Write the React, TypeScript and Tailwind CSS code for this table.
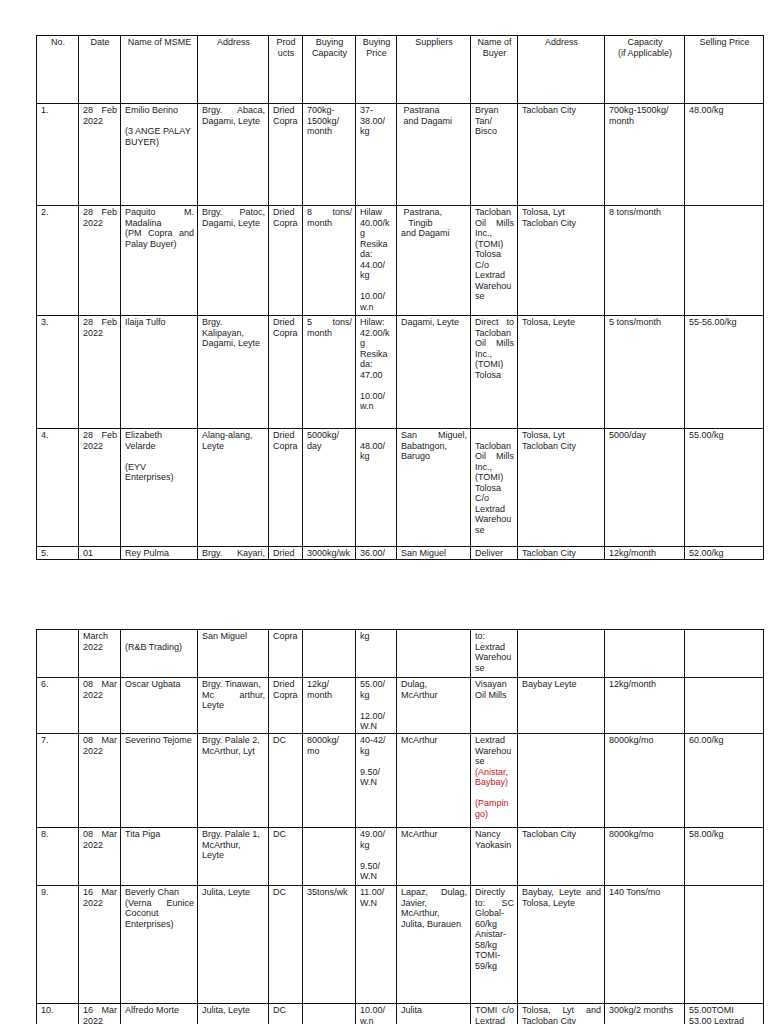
import React from "react";

const COLS =
  "grid grid-cols-[42px_42px_77px_71px_34px_53px_41px_74px_47px_87px_80px_79px]";

type RowData = { h: string; cells: string[][]; header?: boolean };

function Line({ text, center }: { text: string; center?: boolean }) {
  let t = text;
  let justify = false;
  let red = false;
  if (t.startsWith("!")) {
    red = true;
    t = t.slice(1);
  }
  if (t.startsWith("|")) {
    justify = true;
    t = t.slice(1);
  }
  if (t === "") return <div className="h-[10.5px]">{"\u00a0"}</div>;
  return (
    <div
      className={[
        "whitespace-pre",
        justify ? "text-justify [text-align-last:justify] whitespace-normal" : "",
        center ? "text-center" : "",
        red ? "text-[#c81414]" : "",
      ].join(" ")}
    >
      {t}
    </div>
  );
}

function Row({ h, cells, header }: RowData) {
  return (
    <div className={`${COLS} ${h}`}>
      {cells.map((lines, i) => (
        <div
          key={i}
          className="border-r border-b border-[#111] pl-[4px] pr-[3px] pt-[1px] overflow-hidden"
        >
          {lines.map((l, j) => (
            <Line key={j} text={l} center={header} />
          ))}
        </div>
      ))}
    </div>
  );
}

const table1: RowData[] = [
  {
    h: "h-[68px]",
    header: true,
    cells: [
      ["No."],
      ["Date"],
      ["Name of MSME"],
      ["Address"],
      ["Prod", "ucts"],
      ["Buying", "Capacity"],
      ["Buying", "Price"],
      ["Suppliers"],
      ["Name of", "Buyer"],
      ["Address"],
      ["Capacity", "(if Applicable)"],
      ["Selling Price"],
    ],
  },
  {
    h: "h-[102px]",
    cells: [
      ["1."],
      ["|28 Feb", "2022"],
      ["Emilio Berino", "", "(3 ANGE PALAY", "BUYER)"],
      ["|Brgy. Abaca,", "Dagami, Leyte"],
      ["Dried", "Copra"],
      ["700kg-", "1500kg/", "month"],
      ["37-", "38.00/", "kg"],
      [" Pastrana", " and Dagami"],
      ["Bryan", "Tan/", "Bisco"],
      ["Tacloban City"],
      ["700kg-1500kg/", "month"],
      ["48.00/kg"],
    ],
  },
  {
    h: "h-[110px]",
    cells: [
      ["2."],
      ["|28 Feb", "2022"],
      ["|Paquito M.", "Madalina", "|(PM Copra and", "Palay Buyer)"],
      ["|Brgy. Patoc,", "Dagami, Leyte"],
      ["Dried", "Copra"],
      ["|8 tons/", "month"],
      ["Hilaw", "40.00/k", "g", "Resika", "da:", "44.00/", "kg", "", "10.00/", "w.n"],
      [" Pastrana,", "   Tingib", "and Dagami"],
      ["Tacloban", "|Oil Mills", "Inc.,", "(TOMI)", "Tolosa", "C/o", "Lextrad", "Warehou", "se"],
      ["Tolosa, Lyt", "Tacloban City"],
      ["8 tons/month"],
      [],
    ],
  },
  {
    h: "h-[113px]",
    cells: [
      ["3."],
      ["|28 Feb", "2022"],
      ["Ilaija Tulfo"],
      ["Brgy.", "Kalipayan,", "Dagami, Leyte"],
      ["Dried", "Copra"],
      ["|5 tons/", "month"],
      ["Hilaw:", "42.00/k", "g", "Resika", "da:", "47.00", "", "10.00/", "w.n"],
      ["Dagami, Leyte"],
      ["|Direct to", "Tacloban", "|Oil Mills", "Inc.,", "(TOMI)", "Tolosa"],
      ["Tolosa, Leyte"],
      ["5 tons/month"],
      ["55-56.00/kg"],
    ],
  },
  {
    h: "h-[118px]",
    cells: [
      ["4."],
      ["|28 Feb", "2022"],
      ["Elizabeth", "Velarde", "", "(EYV", "Enterprises)"],
      ["Alang-alang,", "Leyte"],
      ["Dried", "Copra"],
      ["5000kg/", "day"],
      ["", "48.00/", "kg"],
      ["|San Miguel,", "Babatngon,", "Barugo"],
      ["", "Tacloban", "|Oil Mills", "Inc.,", "(TOMI)", "Tolosa", "C/o", "Lextrad", "Warehou", "se"],
      ["Tolosa, Lyt", "Tacloban City"],
      ["5000/day"],
      ["55.00/kg"],
    ],
  },
  {
    h: "h-[13px]",
    cells: [
      ["5."],
      ["01"],
      ["Rey Pulma"],
      ["|Brgy. Kayari,"],
      ["Dried"],
      ["3000kg/wk"],
      ["36.00/"],
      ["San Miguel"],
      ["Deliver"],
      ["Tacloban City"],
      ["12kg/month"],
      ["52.00/kg"],
    ],
  },
];

const table2: RowData[] = [
  {
    h: "h-[48px]",
    cells: [
      [],
      ["March", "2022"],
      ["", "(R&B Trading)"],
      ["San Miguel"],
      ["Copra"],
      [],
      ["kg"],
      [],
      ["to:", "Lextrad", "Warehou", "se"],
      [],
      [],
      [],
    ],
  },
  {
    h: "h-[56px]",
    cells: [
      ["6."],
      ["|08 Mar", "2022"],
      ["Oscar Ugbata"],
      ["Brgy. Tinawan,", "|Mc arthur,", "Leyte"],
      ["Dried", "Copra"],
      ["12kg/", "month"],
      ["55.00/", "kg", "", "12.00/", "W.N"],
      ["Dulag,", "McArthur"],
      ["Visayan", "Oil Mills"],
      ["Baybay Leyte"],
      ["12kg/month"],
      [],
    ],
  },
  {
    h: "h-[94px]",
    cells: [
      ["7."],
      ["|08 Mar", "2022"],
      ["Severino Tejome"],
      ["Brgy. Palale 2,", "McArthur, Lyt"],
      ["DC"],
      ["8000kg/", "mo"],
      ["40-42/", "kg", "", "9.50/", "W.N"],
      ["McArthur"],
      ["Lextrad", "Warehou", "se", "!(Anistar,", "!Baybay)", "", "!(Pampin", "!go)"],
      [],
      ["8000kg/mo"],
      ["60.00/kg"],
    ],
  },
  {
    h: "h-[58px]",
    cells: [
      ["8."],
      ["|08 Mar", "2022"],
      ["Tita Piga"],
      ["Brgy. Palale 1,", "McArthur,", "Leyte"],
      ["DC"],
      [],
      ["49.00/", "kg", "", "9.50/", "W.N"],
      ["McArthur"],
      ["Nancy", "Yaokasin"],
      ["Tacloban City"],
      ["8000kg/mo"],
      ["58.00/kg"],
    ],
  },
  {
    h: "h-[118px]",
    cells: [
      ["9."],
      ["|16 Mar", "2022"],
      ["Beverly Chan", "|(Verna Eunice", "Coconut", "Enterprises)"],
      ["Julita, Leyte"],
      ["DC"],
      ["35tons/wk"],
      ["11.00/", "W.N"],
      ["|Lapaz, Dulag,", "Javier,", "McArthur,", "Julita, Burauen"],
      ["Directly", "|to: SC", "Global-", "60/kg", "Anistar-", "58/kg", "TOMI-", "59/kg"],
      ["|Baybay, Leyte and", "Tolosa, Leyte"],
      ["140 Tons/mo"],
      [],
    ],
  },
  {
    h: "h-[60px]",
    cells: [
      ["10."],
      ["|16 Mar", "2022"],
      ["Alfredo Morte"],
      ["Julita, Leyte"],
      ["DC"],
      [],
      ["10.00/", "w.n"],
      ["Julita"],
      ["|TOMI c/o", "Lextrad"],
      ["|Tolosa, Lyt and", "Tacloban City"],
      ["300kg/2 months"],
      ["55.00TOMI", "53.00 Lextrad"],
    ],
  },
];

export default function App() {
  return (
    <div className="min-h-[1024px] w-[768px] bg-white pt-[35px] pl-[36px] font-['Liberation_Sans',Arial,sans-serif] text-[9px] leading-[10.5px] text-[#1c1c1c]">
      <div className="w-[728px] border-l border-t border-[#111]">
        {table1.map((r, i) => (
          <Row key={i} {...r} />
        ))}
      </div>
      <div className="mt-[69px] w-[728px] border-l border-t border-[#111]">
        {table2.map((r, i) => (
          <Row key={i} {...r} />
        ))}
      </div>
    </div>
  );
}
